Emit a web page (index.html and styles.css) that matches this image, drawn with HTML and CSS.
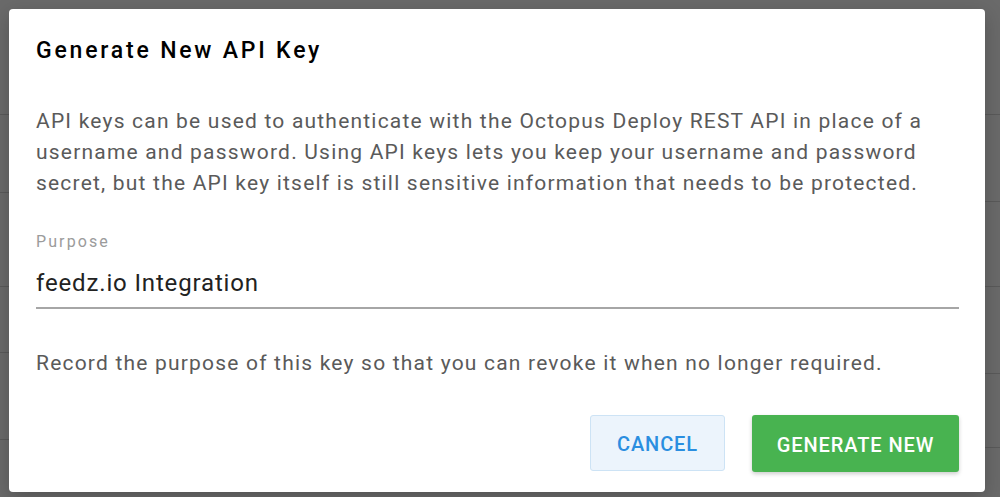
FILE: index.html
```html
<!DOCTYPE html>
<html>
<head>
<meta charset="utf-8">
<link rel="stylesheet" href="styles.css">
</head>
<body>
<div class="backdrop">
  <div class="bg-col bg-left">
    <div class="bg-row r1"></div>
    <div class="bg-row r2"></div>
    <div class="bg-row r3"></div>
    <div class="bg-row r4"></div>
    <div class="bg-row r5"></div>
  </div>
  <div class="bg-col bg-right">
    <div class="bg-row q1"></div>
    <div class="bg-row q2"></div>
    <div class="bg-row q3"></div>
    <div class="bg-row q4"></div>
    <div class="bg-row q5"></div>
  </div>
</div>
<div class="dialog">
  <h2 class="title">Generate New API Key</h2>
  <div class="content">
    <p class="intro">API keys can be used to authenticate with the Octopus Deploy REST API in place of a username and password. Using API keys lets you keep your username and password secret, but the API key itself is still sensitive information that needs to be protected.</p>
    <div class="field">
      <label class="label">Purpose</label>
      <div class="value">feedz.io Integration</div>
    </div>
    <p class="hint">Record the purpose of this key so that you can revoke it when no longer required.</p>
  </div>
  <div class="actions">
    <button class="btn btn-cancel">CANCEL</button>
    <button class="btn btn-primary">GENERATE NEW</button>
  </div>
</div>
</body>
</html>
```

FILE: styles.css
```css
* { box-sizing: border-box; }
html, body { margin: 0; padding: 0; }
body {
  width: 1000px;
  height: 497px;
  overflow: hidden;
  background: #6a6a6a;
  font-family: Roboto, "Liberation Sans", sans-serif;
  position: relative;
}
.backdrop {
  display: flex;
  height: 497px;
}
.bg-col { display: flex; flex-direction: column; }
.bg-left { width: 500px; }
.bg-right { flex: 1; }
.bg-row { border-bottom: 1px solid #5a5a5a; flex: none; }
.r1 { height: 115px; }
.r2 { height: 78px; }
.r3 { height: 94px; }
.r4 { height: 66px; }
.r5 { height: 87px; }
.q1 { height: 115px; }
.q2 { height: 87px; }
.q3 { height: 85px; }
.q4 { height: 87px; }
.q5 { height: 74px; }

.dialog {
  position: absolute;
  left: 9px;
  top: 9px;
  width: 976px;
  height: 483px;
  background: #fff;
  border-radius: 4px;
  box-shadow: 0 6px 20px rgba(0,0,0,0.22);
  display: flex;
  flex-direction: column;
  padding: 0 26px 0 27px;
}
.title {
  margin: 0;
  padding-top: 26px;
  font-size: 23px;
  line-height: 32px;
  font-weight: 500;
  letter-spacing: 2.8px;
  color: #000;
}
.content { flex: 1; }
.intro {
  margin: 39px 0 0;
  font-size: 21px;
  line-height: 31px;
  letter-spacing: 1.2px;
  color: #5a5a5a;
}
.field { margin-top: 32px; }
.label {
  display: block;
  font-size: 16px;
  line-height: 22px;
  letter-spacing: 2.1px;
  color: #9b9b9b;
}
.value {
  margin-top: 14px;
  font-size: 24px;
  line-height: 32px;
  letter-spacing: 0.85px;
  padding-bottom: 8px;
  color: #222;
  border-bottom: 2px solid #a6a6a6;
}
.hint {
  margin: 39px 0 0;
  font-size: 21px;
  line-height: 31px;
  letter-spacing: 1.2px;
  color: #5a5a5a;
}
.actions {
  display: flex;
  justify-content: flex-end;
  gap: 27px;
  padding-bottom: 20px;
}
.btn {
  font-family: Roboto, "Liberation Sans", sans-serif;
  font-size: 20px;
  font-weight: 500;
  letter-spacing: 0.9px;
  height: 57px;
  padding-top: 3px;
  border-radius: 3px;
  cursor: pointer;
}
.btn-cancel {
  width: 135px;
  height: 56px;
  background: #ecf4fc;
  border: 1px solid #cde3f5;
  color: #2a8ee0;
}
.btn-primary {
  width: 207px;
  background: #48b350;
  border: none;
  color: #fff;
  box-shadow: 0 2px 4px rgba(0,0,0,0.2);
}
```
